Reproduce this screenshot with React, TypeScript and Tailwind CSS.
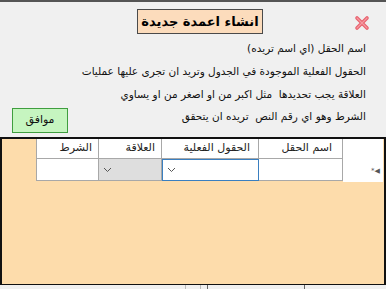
import React from "react";

const F = { fontFamily: '"DejaVu Sans", Tahoma, sans-serif' };

function Chevron() {
  return (
    <svg width="9" height="6" viewBox="0 0 9 6">
      <path d="M1 1 L4.5 4.5 L8 1" fill="none" stroke="#555" strokeWidth="1" />
    </svg>
  );
}

export default function App() {
  return (
    <div className="w-[386px] h-[289px] bg-[#f0f0f0] flex flex-col overflow-hidden" style={F}>
      <div className="h-[2px] bg-[#555] shrink-0" />
      <div className="flex items-start pt-[7px] h-[35px] shrink-0">
        <div className="ml-[137px] w-[126px] h-[25px] bg-[#fcdcbc] border border-[#4a4a4a] flex items-center justify-center">
          <span dir="rtl" className="text-[13px] font-bold text-black leading-none whitespace-nowrap">انشاء اعمدة جديدة</span>
        </div>
        <div className="ml-[91px] mt-[6px]">
          <svg width="16" height="16" viewBox="0 0 16 16">
            <path d="M3 3 L13 13 M13 3 L3 13" stroke="#e8606c" strokeWidth="3.6" strokeLinecap="round" />
            <path d="M3 3 L13 13 M13 3 L3 13" stroke="#f59aa2" strokeWidth="1.2" strokeLinecap="round" />
          </svg>
        </div>
      </div>
      <div className="flex flex-col items-end text-[10.5px] text-[#111] shrink-0">
        <div dir="rtl" className="h-[23px] leading-[23px] pr-[20px] whitespace-nowrap">اسم الحقل (اي اسم تريده)</div>
        <div dir="rtl" className="h-[23px] leading-[23px] pr-[20px] whitespace-nowrap">الحقول الفعلية الموجودة في الجدول وتريد ان تجرى عليها عمليات</div>
        <div dir="rtl" className="h-[22px] leading-[22px] pr-[20px] whitespace-nowrap">العلاقة يجب تحديدها&nbsp; مثل اكبر من او اصغر من او يساوي</div>
        <div className="w-full flex items-start justify-between h-[32px]">
          <div className="ml-[12px] mt-[3px] w-[56px] h-[25px] bg-[#c6f5c0] border border-[#3f9e3f] flex items-center justify-center text-[11px]">
            <span dir="rtl">موافق</span>
          </div>
          <div dir="rtl" className="h-[22px] leading-[22px] pr-[20px] whitespace-nowrap">الشرط وهو اي رقم النص&nbsp; تريده ان يتحقق</div>
        </div>
      </div>
      <div className="h-[148px] shrink-0 bg-[#fddcab] border-[2px] border-[#111] border-b-[1px] flex flex-col">
        <div className="ml-[34px] w-[347px] flex text-[11px] text-[#222]" dir="ltr">
          <div className="flex flex-col">
            <div className="flex h-[20px] bg-white">
              <div dir="rtl" className="w-[63px] border-l border-r border-b border-[#a8a8a8] flex items-center pr-[6px]">الشرط</div>
              <div dir="rtl" className="w-[63px] border-r border-b border-[#a8a8a8] flex items-center pr-[6px]">العلاقة</div>
              <div dir="rtl" className="w-[97px] border-r border-b border-[#a8a8a8] flex items-center pr-[8px]">الحقول الفعلية</div>
              <div dir="rtl" className="w-[84px] border-r border-b border-[#a8a8a8] flex items-center pr-[10px]">اسم الحقل</div>
            </div>
            <div className="flex h-[22px]">
              <div className="w-[63px] bg-white border-l border-r border-b border-[#a8a8a8]" />
              <div className="w-[63px] bg-[#dedede] border-r border-b border-[#a8a8a8] flex items-center pl-[4px]">
                <Chevron />
              </div>
              <div className="w-[97px] bg-white border border-[#3a7fc0] flex items-center pl-[4px]">
                <Chevron />
              </div>
              <div className="w-[84px] bg-white border-r border-b border-[#a8a8a8]" />
            </div>
          </div>
          <div className="w-[40px] h-[43px] bg-white flex items-end justify-end pr-[3px] pb-[7px]">
            <span className="text-[7px] text-[#555] leading-none">*◀</span>
          </div>
        </div>
      </div>
      <div className="flex-1 flex relative">
        <div className="absolute left-[185px] top-0 h-full w-px bg-[#bbb]" />
        <div className="absolute left-[200px] top-0 h-full w-px bg-[#bbb]" />
        <div className="absolute left-[207px] top-0 h-full w-px bg-[#666]" />
        <div className="absolute left-[304px] top-0 h-full w-px bg-[#666]" />
      </div>
    </div>
  );
}
